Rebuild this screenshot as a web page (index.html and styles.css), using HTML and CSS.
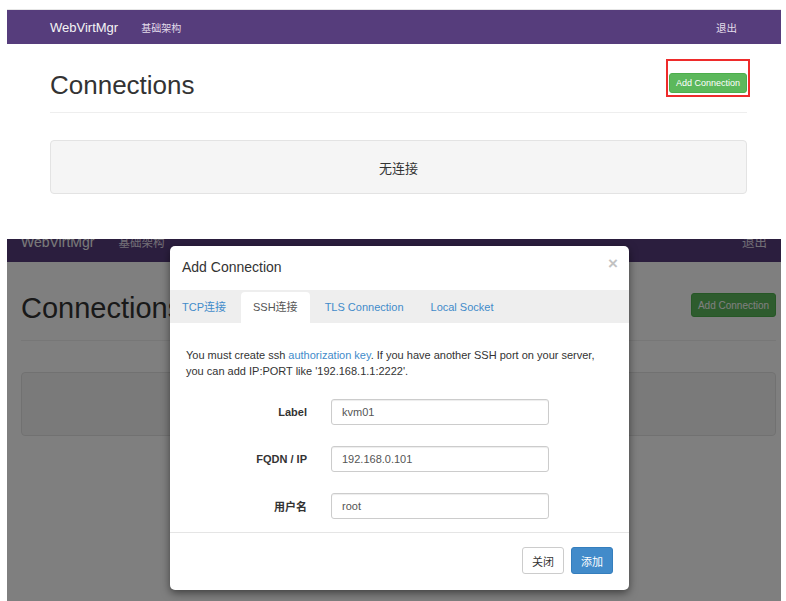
FILE: index.html
```html
<!DOCTYPE html>
<html lang="zh-CN">
<head>
<meta charset="utf-8">
<title>WebVirtMgr - Connections</title>
<link rel="stylesheet" href="styles.css">
</head>
<body>
<div class="shot shot-top">
  <nav class="navbar">
    <div class="nav-inner">
      <span class="brand">WebVirtMgr</span>
      <span class="nav-link">基础架构</span>
      <span class="nav-spacer"></span>
      <span class="nav-link nav-link-right">退出</span>
    </div>
  </nav>
  <main class="container">
    <div class="page-header">
      <h1 class="title">Connections</h1>
      <div class="highlight">
        <button class="btn btn-success btn-add">Add Connection</button>
      </div>
    </div>
    <div class="well">无连接</div>
  </main>
</div>

<div class="shot shot-bottom">
  <div class="page">
    <nav class="navbar navbar-lg">
      <div class="nav-inner nav-inner-lg">
        <span class="brand brand-lg">WebVirtMgr</span>
        <span class="nav-link nav-link-lg">基础架构</span>
        <span class="nav-spacer"></span>
        <span class="nav-link nav-link-lg-right">退出</span>
      </div>
    </nav>
    <main class="container container-lg">
      <div class="page-header page-header-lg">
        <h1 class="title title-lg">Connections</h1>
        <button class="btn btn-success btn-add-lg">Add Connection</button>
      </div>
      <div class="well well-lg">无连接</div>
    </main>
  </div>
  <div class="backdrop"></div>
  <div class="modal">
    <div class="modal-header">
      <h4 class="modal-title">Add Connection</h4>
      <span class="close">×</span>
    </div>
    <ul class="tabs">
      <li class="tab">TCP连接</li>
      <li class="tab active">SSH连接</li>
      <li class="tab">TLS Connection</li>
      <li class="tab">Local Socket</li>
    </ul>
    <div class="modal-body">
      <p class="note">You must create ssh <a href="#">authorization key</a>. If you have another SSH port on your server, you can add IP:PORT like '192.168.1.1:2222'.</p>
      <form class="form">
        <label>Label</label>
        <input type="text" value="kvm01">
        <label>FQDN / IP</label>
        <input type="text" value="192.168.0.101">
        <label>用户名</label>
        <input type="text" value="root">
      </form>
    </div>
    <div class="modal-footer">
      <button class="btn btn-default">关闭</button>
      <button class="btn btn-primary">添加</button>
    </div>
  </div>
</div>
</body>
</html>
```

FILE: styles.css
```css
* { box-sizing: border-box; }

html, body {
  margin: 0;
  background: #fff;
}

body {
  padding: 9px 0 0 7px;
  font-family: "Liberation Sans", "Noto Sans CJK SC", Arial, sans-serif;
  color: #333;
}

.shot {
  width: 774px;
}

.shot-top {
  border-top: 1px solid #e6e6e6;
}

/* navbar */
.navbar {
  background: #563d7c;
}

.nav-inner {
  display: flex;
  align-items: center;
  height: 34px;
  padding: 0 44px 0 43px;
}

.brand {
  font-size: 13px;
  color: #f4f4f4;
  margin-right: 23px;
}

.nav-link {
  font-size: 10px;
  color: #e2dcea;
}

.nav-link-right {
  font-size: 10.5px;
}

.nav-spacer {
  flex: 1;
}

/* page */
.container {
  padding: 0 34px 0 43px;
}

.page-header {
  display: flex;
  justify-content: space-between;
  align-items: flex-start;
  margin-top: 15px;
  padding-bottom: 12px;
  border-bottom: 1px solid #eee;
}

.title {
  margin: 11px 0 0;
  font-size: 26px;
  line-height: 30px;
  font-weight: 400;
  color: #333;
}

.highlight {
  width: 84px;
  height: 38px;
  margin-right: -3px;
  padding: 11px 1px 3px 1px;
  border: 2px solid #ee2b2b;
}

.btn {
  display: inline-flex;
  align-items: center;
  justify-content: center;
  padding: 0;
  border: 1px solid transparent;
  border-radius: 3px;
  font-family: "Liberation Sans", "Noto Sans CJK SC", Arial, sans-serif;
  white-space: nowrap;
}

.btn-success {
  background: #5cb85c;
  border-color: #4cae4c;
  color: #fff;
}

.btn-add {
  width: 78px;
  height: 20px;
  font-size: 9px;
}

.well {
  display: flex;
  align-items: center;
  justify-content: center;
  margin-top: 27px;
  height: 54px;
  background: #f5f5f5;
  border: 1px solid #e3e3e3;
  border-radius: 4px;
  font-size: 13px;
  color: #333;
}

/* bottom screenshot */
.shot-bottom {
  position: relative;
  margin-top: 45px;
  height: 362px;
  overflow: hidden;
  background: #fff;
}

.navbar-lg {
  margin-top: -21px;
}

.nav-inner-lg {
  height: 44px;
  padding: 3px 14px 0 14px;
}

.brand-lg {
  font-size: 14px;
  margin-right: 24px;
}

.nav-link-lg {
  font-size: 11.5px;
}

.nav-link-lg-right {
  font-size: 12.5px;
}

.container-lg {
  padding: 0 5px 0 14px;
}

.page-header-lg {
  margin-top: 29px;
  padding-bottom: 15px;
}

.title-lg {
  margin: 0;
  font-size: 29px;
  line-height: 34px;
}

.btn-add-lg {
  width: 85px;
  height: 24px;
  margin-top: 2px;
  font-size: 10px;
}

.well-lg {
  margin-top: 31px;
  height: 64px;
  font-size: 14px;
}

.backdrop {
  position: absolute;
  inset: 0;
  background: rgba(0, 0, 0, 0.5);
}

/* modal */
.modal {
  position: absolute;
  left: 163px;
  top: 7px;
  width: 459px;
  background: #fff;
  border-radius: 5px;
  box-shadow: 0 3px 9px rgba(0, 0, 0, 0.5);
  overflow: hidden;
}

.modal-header {
  display: flex;
  justify-content: space-between;
  align-items: flex-start;
  padding: 11px 11px 13px 12px;
}

.modal-title {
  margin: 0;
  font-size: 14px;
  line-height: 20px;
  font-weight: 400;
  color: #333;
}

.close {
  margin-top: -3px;
  font-size: 17px;
  line-height: 20px;
  font-weight: 700;
  color: #c2c2c2;
}

.tabs {
  display: flex;
  list-style: none;
  margin: 0;
  padding: 2px 0 0;
  background: #eee;
}

.tab {
  height: 31px;
  line-height: 31px;
  padding: 0 12px;
  margin-right: 3px;
  font-size: 11px;
  color: #428bca;
  border-radius: 4px 4px 0 0;
}

.tab.active {
  background: #fff;
  color: #555;
}

.modal-body {
  padding: 24px 16px 13px;
}

.note {
  margin: 0 0 20px;
  font-size: 11px;
  line-height: 16px;
  color: #333;
}

.note a {
  color: #428bca;
  text-decoration: none;
}

.form {
  display: grid;
  grid-template-columns: 121px 218px;
  column-gap: 24px;
  row-gap: 21px;
  align-items: center;
  margin: 0;
}

.form label {
  text-align: right;
  font-size: 11px;
  font-weight: 700;
  color: #333;
}

.form input {
  width: 218px;
  height: 26px;
  margin: 0;
  padding: 0 10px;
  border: 1px solid #ccc;
  border-radius: 3px;
  box-shadow: inset 0 1px 1px rgba(0, 0, 0, 0.075);
  font-family: "Liberation Sans", "Noto Sans CJK SC", Arial, sans-serif;
  font-size: 11px;
  color: #555;
}

.modal-footer {
  display: flex;
  justify-content: flex-end;
  gap: 7px;
  padding: 14px 16px 16px;
  border-top: 1px solid #e5e5e5;
}

.btn-default {
  width: 42px;
  height: 27px;
  font-size: 11px;
  background: #fff;
  border-color: #ccc;
  color: #333;
}

.btn-primary {
  width: 42px;
  height: 27px;
  font-size: 11px;
  background: #428bca;
  border-color: #357ebd;
  color: #fff;
}
```
